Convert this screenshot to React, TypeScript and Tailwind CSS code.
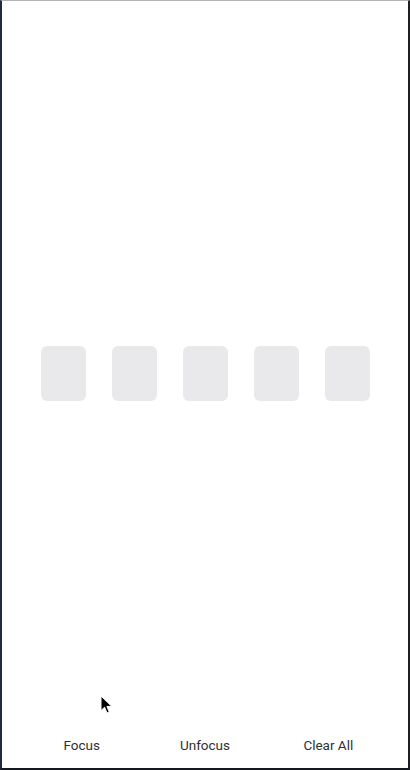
import React from 'react';

const Cursor = () => (
  <svg
    className="absolute left-[98px] top-[694px]"
    width="13"
    height="20"
    viewBox="0 0 13 20"
  >
    <path
      d="M1 1 L1 15.5 L4.6 12.2 L7 18 L9.3 17 L6.9 11.4 L11.8 11.4 Z"
      fill="#000"
      stroke="#fff"
      strokeWidth="1"
      strokeLinejoin="round"
    />
  </svg>
);

const App = () => {
  const cells = [0, 1, 2, 3, 4];
  const actions = ['Focus', 'Unfocus', 'Clear All'];

  return (
    <div
      className="relative w-[410px] h-[770px] bg-white flex flex-col border-t border-t-[#b4b4b4] border-l-2 border-l-[#23293f] border-r-2 border-r-[#1e1e24] border-b-2 border-b-[#15181f]"
      style={{ fontFamily: 'Roboto, "Noto Sans", sans-serif' }}
    >
      <div className="flex-1 flex items-center justify-center pt-[7px]">
        <div className="flex gap-[26px]">
          {cells.map((c) => (
            <div key={c} className="w-[45px] h-[55px] rounded-[6px] bg-[#e9e9eb]" />
          ))}
        </div>
      </div>

      <div className="flex px-[18px] pb-[17px]">
        {actions.map((label) => (
          <button
            key={label}
            className="flex-1 h-[12px] flex items-center justify-center text-[13.5px] text-[#2f2f33]"
          >
            {label}
          </button>
        ))}
      </div>

      <Cursor />
    </div>
  );
};

export default App;
